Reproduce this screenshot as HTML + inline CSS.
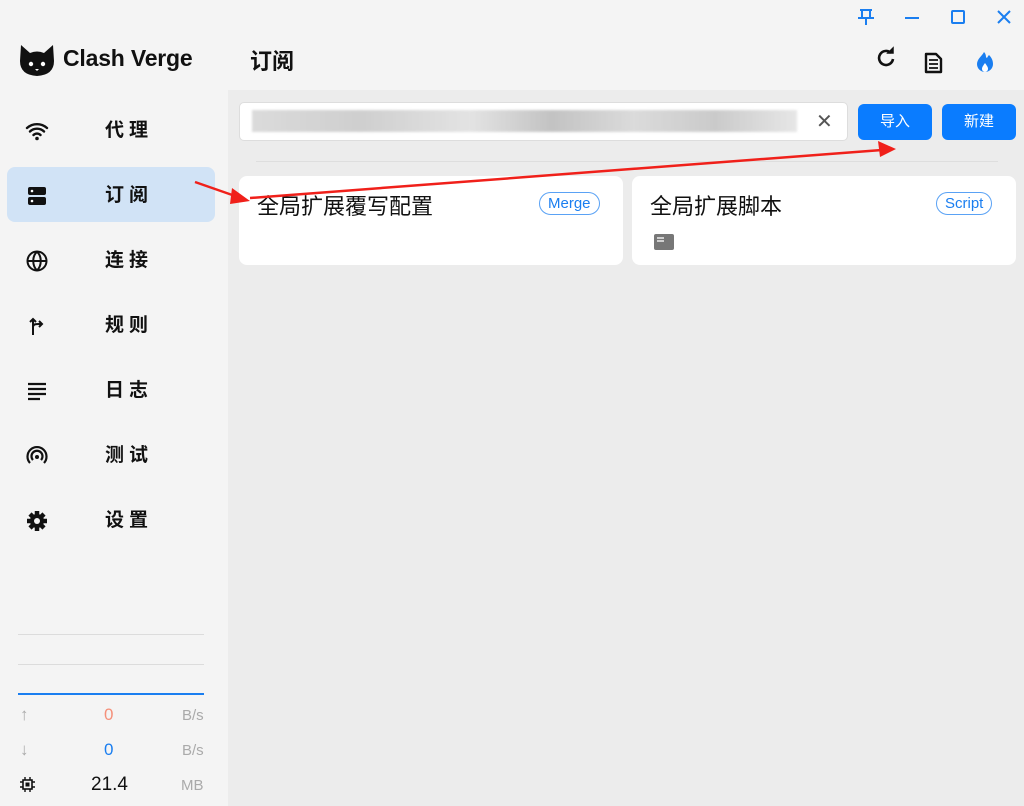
<!DOCTYPE html>
<html><head><meta charset="utf-8"><style>
*{margin:0;padding:0;box-sizing:border-box}
body{width:1024px;height:806px;overflow:hidden;font-family:"Liberation Sans","Noto Sans CJK SC",sans-serif;background:#f4f4f4;position:relative}
.side{position:absolute;left:0;top:0;width:228px;height:806px;background:#f4f4f4}
.main{position:absolute;left:228px;top:0;width:796px;height:806px;background:#f4f4f4}
.content{position:absolute;left:228px;top:90px;width:796px;height:716px;background:#ececec}
.nav{position:absolute;left:7px;width:208px;height:55px;border-radius:8px}
.nav .t{position:absolute;left:98px;top:1px;line-height:55px;font-size:19px;font-weight:bold;letter-spacing:5px;color:#111}
.nav svg{position:absolute;left:18px;top:17px}
.abs{position:absolute}
.card{position:absolute;top:176px;height:89px;background:#fff;border-radius:8px}
.card .ti{position:absolute;left:18px;top:13px;font-size:22px;color:#111}
.tag{position:absolute;top:16px;height:23px;border:1px solid #5aa2f5;border-radius:12px;color:#1a7ef0;font-size:15px;line-height:21px;padding:0 8px}
.btn{position:absolute;top:104px;height:36px;background:#0a7cff;color:#fff;border-radius:6px;font-size:15px;text-align:center;line-height:36px}
.hl{position:absolute;left:18px;width:186px;height:1px;background:#dcdcdc}
.st{position:absolute;font-size:17px}
</style></head><body>
<div class="side">
 <svg class="abs" style="left:18px;top:43px" width="38" height="34" viewBox="0 0 38 34"><path d="M3 2 L12 10 Q19 7 26 10 L35 2 L36 18 Q36 32 19 33 Q2 32 2 18 Z" fill="#111"/><circle cx="13" cy="21" r="2.2" fill="#fff"/><circle cx="25" cy="21" r="2.2" fill="#fff"/><path d="M17 26 h4 l-2 2z" fill="#fff"/></svg>
 <div class="abs" style="left:63px;top:45px;font-size:23px;font-weight:bold;color:#111;letter-spacing:-0.2px">Clash Verge</div>
 <div class="nav" style="top:102px"><svg width="24" height="24" viewBox="0 0 24 24"><path d="M2 9a15 15 0 0 1 20 0M5 12.5a10 10 0 0 1 14 0M8.5 16a5 5 0 0 1 7 0" stroke="#111" stroke-width="2.4" fill="none" stroke-linecap="round"/><circle cx="12" cy="19.5" r="1.8" fill="#111"/></svg><span class="t">代理</span></div>
 <div class="nav" style="top:167px;background:#d1e3f6"><svg width="24" height="24" viewBox="0 0 24 24"><rect x="3" y="3" width="18" height="8" rx="2" fill="#111"/><rect x="3" y="13" width="18" height="8" rx="2" fill="#111"/><circle cx="7" cy="7" r="1.3" fill="#fff"/><circle cx="7" cy="17" r="1.3" fill="#fff"/></svg><span class="t">订阅</span></div>
 <div class="nav" style="top:232px"><svg width="24" height="24" viewBox="0 0 24 24"><circle cx="12" cy="12" r="9.5" stroke="#111" stroke-width="2" fill="none"/><path d="M2.5 12h19M12 2.5c-5 5-5 14 0 19M12 2.5c5 5 5 14 0 19" stroke="#111" stroke-width="2" fill="none"/></svg><span class="t">连接</span></div>
 <div class="nav" style="top:297px"><svg width="24" height="24" viewBox="0 0 24 24"><path d="M8 21V5M5 8l3-3 3 3M8 13c0-3 3-3 6-3h2M14 7l3 3-3 3" stroke="#111" stroke-width="2" fill="none"/></svg><span class="t">规则</span></div>
 <div class="nav" style="top:362px"><svg width="24" height="24" viewBox="0 0 24 24"><path d="M3 5h18M3 10h18M3 15h18M3 20h12" stroke="#111" stroke-width="2.2"/></svg><span class="t">日志</span></div>
 <div class="nav" style="top:427px"><svg width="24" height="24" viewBox="0 0 24 24"><path d="M5 19a9.5 9.5 0 1 1 14 0M8 16a5.5 5.5 0 1 1 8 0" stroke="#111" stroke-width="2.2" fill="none"/><circle cx="12" cy="13" r="2" fill="#111"/></svg><span class="t">测试</span></div>
 <div class="nav" style="top:492px"><svg width="24" height="24" viewBox="0 0 24 24"><circle cx="12" cy="12" r="7" fill="#111"/><path d="M12 2v20M2 12h20M5 5l14 14M19 5L5 19" stroke="#111" stroke-width="4.5"/><circle cx="12" cy="12" r="3" fill="#f4f4f4"/></svg><span class="t">设置</span></div>
 <div class="hl" style="top:634px"></div>
 <div class="hl" style="top:664px"></div>
 <div class="hl" style="top:693px;height:2px;background:#1a7ef0"></div>
 <div class="st" style="left:20px;top:705px;color:#aaa">↑</div><div class="st" style="left:104px;top:705px;color:#f5907a">0</div><div class="st" style="left:182px;top:707px;color:#aaa;font-size:15px">B/s</div>
 <div class="st" style="left:20px;top:740px;color:#aaa">↓</div><div class="st" style="left:104px;top:740px;color:#1a7ef0">0</div><div class="st" style="left:182px;top:742px;color:#aaa;font-size:15px">B/s</div>
 <svg class="abs" style="left:20px;top:777px" width="15" height="15" viewBox="0 0 15 15"><rect x="3" y="3" width="9" height="9" stroke="#111" stroke-width="1.6" fill="none"/><rect x="5.5" y="5.5" width="4" height="4" fill="#111"/><path d="M5 0v3M10 0v3M5 12v3M10 12v3M0 5h3M0 10h3M12 5h3M12 10h3" stroke="#111" stroke-width="1.4"/></svg>
 <div class="st" style="left:91px;top:774px;color:#111;font-size:19px">21.4</div><div class="st" style="left:181px;top:777px;color:#aaa;font-size:15px">MB</div>
</div>
<div class="main">
 <div class="abs" style="left:22px;top:44px;font-size:22px;font-weight:bold;color:#111">订阅</div>
</div>
<svg class="abs" style="left:855px;top:6px" width="165" height="76" viewBox="0 0 165 76">
 <path d="M5 4h12M7 4v7M15 4v7M3 12h16M11 12v7" stroke="#1a7ef0" stroke-width="2" fill="none"/>
 <path d="M50 12h14" stroke="#1a7ef0" stroke-width="2"/>
 <rect x="97" y="5" width="12" height="12" stroke="#1a7ef0" stroke-width="2" fill="none" rx="1"/>
 <path d="M143 5l12 12M155 5l-12 12" stroke="#1a7ef0" stroke-width="2"/>
 <g transform="translate(0,6)">
 <path d="M38 47a7 7 0 1 1-2-6" stroke="#111" stroke-width="2.6" fill="none"/><path d="M33 41h5v-5z" fill="#111" stroke="#111" stroke-width="1.5"/>
 <path d="M71 42h10l5 5v13H71z" stroke="#111" stroke-width="2.4" fill="none" stroke-linejoin="round"/><path d="M74 48h9M74 52h9M74 56h9" stroke="#111" stroke-width="1.8"/>
 <path d="M129 40c3 3 1 5 3 6 1-2 2-3 2-3 3 3 4 6 4 9a8 8 0 0 1-16 0c0-5 5-8 7-12z" fill="#1a7ef0"/><path d="M130 51c-2 3-3 4-3 6a3 3 0 0 0 6 0c0-2-1-3-3-6z" fill="#fff"/>
 </g>
</svg>
<div class="content"></div>
<div class="abs" style="left:239px;top:102px;width:609px;height:39px;background:#fff;border:1px solid #ddd;border-radius:5px"></div>
<div class="abs" style="left:252px;top:110px;width:545px;height:22px;background:linear-gradient(90deg,#ccc,#bbb 20%,#d8d8d8 40%,#aaa 55%,#ccc 70%,#b5b5b5 85%,#ddd);opacity:.7;filter:blur(1px)"></div>
<div class="abs" style="left:816px;top:109px;font-size:20px;color:#555">✕</div>
<div class="btn" style="left:858px;width:74px">导入</div>
<div class="btn" style="left:942px;width:74px">新建</div>
<div class="abs" style="left:256px;top:161px;width:742px;height:1px;background:#dedede"></div>
<div class="card" style="left:239px;width:384px"><div class="ti">全局扩展覆写配置</div><div class="tag" style="left:300px">Merge</div></div>
<div class="card" style="left:632px;width:384px"><div class="ti">全局扩展脚本</div><div class="tag" style="left:304px">Script</div>
 <svg class="abs" style="left:21px;top:57px" width="22" height="18" viewBox="0 0 22 18"><rect x="1" y="1" width="20" height="16" rx="2" fill="#777"/><path d="M4 5h7M4 8h7" stroke="#eee" stroke-width="1.5"/></svg></div>
<svg class="abs" style="left:0;top:0" width="1024" height="806" viewBox="0 0 1024 806">
 <path d="M195 182L238 197" stroke="#f0201a" stroke-width="2.5"/><path d="M250 201L232 188 230 204z" fill="#f0201a"/>
 <path d="M250 198L882 150" stroke="#f0201a" stroke-width="2.5"/><path d="M896 149L878 141 880 157z" fill="#f0201a"/>
</svg>
</body></html>
